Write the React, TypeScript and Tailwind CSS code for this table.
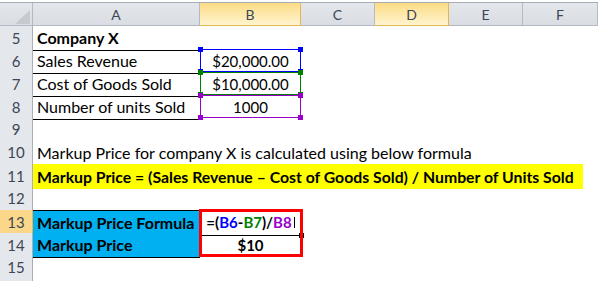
import React from "react";

type Kids = { children?: React.ReactNode };

const ColHead = ({ children, active }: Kids & { active?: boolean }) => (
  <div
    className={
      active
        ? "flex items-center justify-center border-r border-b border-[#e2b650] bg-gradient-to-b from-[#fcdc84] to-[#fff4cf] text-[14px] text-[#3b4657]"
        : "flex items-center justify-center border-r border-b border-[#b4bac3] bg-gradient-to-b from-[#e3e6ea] to-[#dadee4] text-[14px] text-[#3b4657]"
    }
  >
    {children}
  </div>
);

const RowHead = ({ n, active }: { n?: number; active?: boolean }) => (
  <div
    className={
      active
        ? "flex items-center justify-center border-r border-b border-[#e2b650] bg-[#fbd889] text-[15px] text-[#3b4657]"
        : "flex items-center justify-center border-r border-b border-r-[#a9b0b9] border-b-[#c8ccd2] bg-[#e4e7eb] text-[15px] text-[#3b4657]"
    }
  >
    {n}
  </div>
);

const Row = ({ children }: Kids) => (
  <div className="grid h-[23px] grid-cols-[33px_167px_101px_74px_74px_74px_75px]">{children}</div>
);

const Empty = () => <div />;

const Handle = ({ pos, color }: { pos: string; color: string }) => (
  <span className={`absolute size-[5px] ${pos} ${color}`} />
);

const Range = ({ border, fill }: { border: string; fill: string }) => (
  <div className={`absolute left-0 top-0 h-[23px] w-[101px] border ${border}`}>
    <Handle pos="-left-[3px] -top-[3px]" color={fill} />
    <Handle pos="-right-[3px] -top-[3px]" color={fill} />
    <Handle pos="-left-[3px] -bottom-[3px]" color={fill} />
    <Handle pos="-right-[3px] -bottom-[3px]" color={fill} />
  </div>
);

export default function App() {
  return (
    <div className="h-[281px] w-[598px] overflow-hidden bg-white font-[Lato,'Liberation_Sans',sans-serif] text-[16px] text-black">
      <div className="h-[2px] bg-white" />
      <div className="h-px bg-[#a7aeb7]" />

      {/* column headers */}
      <div className="grid h-[23px] grid-cols-[33px_167px_101px_74px_74px_74px_75px]">
        <div className="relative border-r border-b border-[#b4bac3] bg-gradient-to-b from-[#e3e6ea] to-[#dadee4]">
          <svg className="absolute left-[15px] top-[7px]" width="15" height="14" viewBox="0 0 15 14">
            <polygon points="0,14 15,14 15,0" fill="#c5cad1" />
          </svg>
        </div>
        <ColHead>A</ColHead>
        <ColHead active>B</ColHead>
        <ColHead>C</ColHead>
        <ColHead active>D</ColHead>
        <ColHead>E</ColHead>
        <ColHead>F</ColHead>
      </div>

      <Row>
        <RowHead n={5} />
        <div className="flex items-center border-b border-black pl-[4px] font-bold">Company X</div>
        <Empty /><Empty /><Empty /><Empty /><Empty />
      </Row>
      <Row>
        <RowHead n={6} />
        <div className="flex items-center border-b border-black pl-[4px]">Sales Revenue</div>
        <div className="relative flex items-center justify-center text-[15px]">
          $20,000.00
          <Range border="border-[#0000ff]" fill="bg-[#0000ff]" />
        </div>
        <Empty /><Empty /><Empty /><Empty />
      </Row>
      <Row>
        <RowHead n={7} />
        <div className="flex items-center border-b border-black pl-[4px]">Cost of Goods Sold</div>
        <div className="relative flex items-center justify-center text-[15px]">
          $10,000.00
          <Range border="border-[#008000]" fill="bg-[#008000]" />
        </div>
        <Empty /><Empty /><Empty /><Empty />
      </Row>
      <Row>
        <RowHead n={8} />
        <div className="flex items-center border-b border-black pl-[4px]">Number of units Sold</div>
        <div className="relative flex items-center justify-center text-[15px]">
          1000
          <Range border="border-[#9900cc]" fill="bg-[#9900cc]" />
        </div>
        <Empty /><Empty /><Empty /><Empty />
      </Row>
      <Row>
        <RowHead n={9} />
        <Empty /><Empty /><Empty /><Empty /><Empty /><Empty />
      </Row>
      <Row>
        <RowHead n={10} />
        <div className="flex items-center whitespace-nowrap pl-[4px]">
          Markup Price for company X is calculated using below formula
        </div>
        <Empty /><Empty /><Empty /><Empty /><Empty />
      </Row>
      <Row>
        <RowHead n={11} />
        <div className="relative z-10">
          <div className="flex h-[25px] w-[550px] items-center whitespace-nowrap bg-[#ffff00] pl-[4px] text-[15.8px] font-bold">
            Markup Price = (Sales Revenue – Cost of Goods Sold) / Number of Units Sold
          </div>
        </div>
        <Empty /><Empty /><Empty /><Empty /><Empty />
      </Row>
      <Row>
        <RowHead n={12} />
        <Empty /><Empty /><Empty /><Empty /><Empty /><Empty />
      </Row>
      <Row>
        <RowHead n={13} active />
        <div className="flex items-center border-y border-black bg-[#00b0f0] pl-[4px] font-bold">
          Markup Price Formula
        </div>
        <div className="relative flex items-center justify-center border-b border-black text-[15px] font-bold">
          <span>
            =(<span className="text-[#0000ff]">B6</span>-<span className="text-[#008000]">B7</span>)/
            <span className="text-[#9900cc]">B8</span>
          </span>
          <span className="ml-[2px] inline-block h-[11px] w-px bg-black" />
          <span className="absolute -right-[3px] -bottom-[3px] size-[5px] bg-black" />
          <div className="absolute -left-px -top-px z-10 h-[48px] w-[104px] border-[3px] border-[#ff0000]" />
        </div>
        <Empty /><Empty /><Empty /><Empty />
      </Row>
      <Row>
        <RowHead n={14} />
        <div className="flex items-center border-b border-black bg-[#00b0f0] pl-[4px] font-bold">Markup Price</div>
        <div className="flex items-center justify-center text-[15px] font-bold">$10</div>
        <Empty /><Empty /><Empty /><Empty />
      </Row>
      <Row>
        <RowHead n={15} />
        <Empty /><Empty /><Empty /><Empty /><Empty /><Empty />
      </Row>
      <Row>
        <RowHead />
        <Empty /><Empty /><Empty /><Empty /><Empty /><Empty />
      </Row>
    </div>
  );
}
